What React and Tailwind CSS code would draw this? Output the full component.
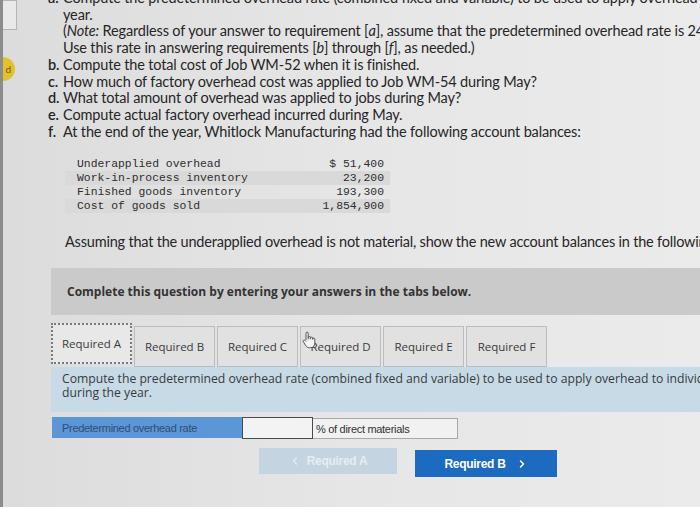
import { ChevronLeft, ChevronRight } from "lucide-react";

const balances = [
  { label: "Underapplied overhead", value: "$ 51,400" },
  { label: "Work-in-process inventory", value: "23,200" },
  { label: "Finished goods inventory", value: "193,300" },
  { label: "Cost of goods sold", value: "1,854,900" },
];

const tabs = ["Required A", "Required B", "Required C", "Required D", "Required E", "Required F"];

function Item({ letter, children }) {
  return (
    <div className="flex whitespace-nowrap">
      <span className="w-[15px] shrink-0 font-semibold">{letter}</span>
      <span>{children}</span>
    </div>
  );
}

function HandCursor() {
  return (
    <svg width="16" height="18" viewBox="0 0 16 18" className="absolute left-[298px] top-[331px]">
      <path
        d="M5 9V2.2a1.1 1.1 0 0 1 2.2 0V8m0-1.5a1.1 1.1 0 0 1 2.2 0V8m0-.8a1.1 1.1 0 0 1 2.2 0V8.5m0-.3a1.1 1.1 0 0 1 2.2 0v4c0 2.5-1.8 4.5-4.3 4.5H8.3c-1.5 0-2.6-.7-3.4-1.9L2.2 10.6a1.1 1.1 0 0 1 1.7-1.3L5 10.5"
        fill="#f4f4f4"
        stroke="#444"
        strokeWidth="0.9"
        strokeLinejoin="round"
      />
    </svg>
  );
}

export default function App() {
  return (
    <div className="relative w-[700px] h-[507px] overflow-hidden bg-linear-to-r from-[#dcdcdc] via-[#e6e6e6] to-[#ebebeb] border-l-[3px] border-[#8c8c8c] font-['Lato',sans-serif] text-[#262626]">
      {/* left-edge fragments */}
      <div className="absolute -left-px top-0 w-[15px] h-[30px] border border-[#b5b5b5] bg-[#e9e9e9]" />
      <div className="absolute -left-[12px] top-[57px] w-[24px] h-[24px] rounded-full bg-[#e2c22c] flex items-center justify-end pr-[4px] text-[10px] text-[#6b5a10]">
        d
      </div>

      {/* question text */}
      <div className="pl-[45px] -mt-[10px] text-[14.5px] leading-[16.7px] tracking-[-0.15px]">
        <Item letter="a.">
          Compute the predetermined overhead rate (combined fixed and variable) to be used to apply overhead to individual jobs during the
        </Item>
        <div className="pl-[15px] whitespace-nowrap">
          <div>year.</div>
          <div>
            (<i>Note:</i> Regardless of your answer to requirement [<i>a</i>], assume that the predetermined overhead rate is 240% of direct materials.
          </div>
          <div>
            Use this rate in answering requirements [<i>b</i>] through [<i>f</i>], as needed.)
          </div>
        </div>
        <Item letter="b.">Compute the total cost of Job WM-52 when it is finished.</Item>
        <Item letter="c.">How much of factory overhead cost was applied to Job WM-54 during May?</Item>
        <Item letter="d.">What total amount of overhead was applied to jobs during May?</Item>
        <Item letter="e.">Compute actual factory overhead incurred during May.</Item>
        <Item letter="f.">At the end of the year, Whitlock Manufacturing had the following account balances:</Item>
      </div>

      {/* balances table */}
      <div className="ml-[62px] mt-[17px] w-[325px] font-['Liberation_Mono',monospace] text-[11.4px] leading-[14px] text-[#2e2e2e]">
        {balances.map((row, i) => (
          <div
            key={row.label}
            className={`flex justify-between pl-[12px] pr-[6px] ${i % 2 === 1 ? "bg-[#d9d9d9]" : ""}`}
          >
            <span>{row.label}</span>
            <span>{row.value}</span>
          </div>
        ))}
      </div>

      <div className="ml-[62px] mt-[20px] whitespace-nowrap text-[14.5px] leading-[17px] tracking-[-0.2px]">
        Assuming that the underapplied overhead is not material, show the new account balances in the following table.
      </div>

      {/* instructions band */}
      <div className="ml-[48px] mt-[18px] h-[47px] bg-[#cacaca] flex items-center pl-[16px] font-['Open_Sans',sans-serif] text-[12px] font-bold text-[#333]">
        Complete this question by entering your answers in the tabs below.
      </div>

      {/* tabs */}
      <div className="ml-[48px] mt-[8px] flex gap-[2px] font-['Open_Sans',sans-serif] text-[11.5px] text-[#3a3a3a]">
        {tabs.map((t, i) => (
          <div
            key={t}
            className={`w-[81px] h-[41px] flex items-center justify-center ${
              i === 0
                ? "bg-[#e8e8e8] border-2 border-dotted border-[#7a7a7a]"
                : "bg-[#e1e1e1] border border-[#bcbcbc] mt-[3px]"
            }`}
          >
            {t}
          </div>
        ))}
      </div>

      <div className="ml-[48px] h-[45px] bg-[#c7dae6] pl-[11px] pt-[5px] font-['Open_Sans',sans-serif] text-[12.2px] leading-[14px] text-[#3a3a3a] whitespace-nowrap">
        <div>Compute the predetermined overhead rate (combined fixed and variable) to be used to apply overhead to individual jobs</div>
        <div>during the year.</div>
      </div>

      {/* answer row */}
      <div className="ml-[49px] mt-[5px] flex items-start font-['Liberation_Sans',sans-serif] text-[11px] tracking-[-0.3px]">
        <div className="w-[190px] h-[21px] bg-[#5b96d6] text-[#2f4e72] pl-[10px] flex items-center">
          Predetermined overhead rate
        </div>
        <div className="w-[71px] h-[22px] bg-[#f3f3f3] border border-[#4a4a4a]" />
        <div className="w-[145px] h-[21px] mt-[1px] bg-[#f1f1f1] border border-[#a8a8a8] border-l-0 pl-[3px] flex items-center text-[#333]">
          % of direct materials
        </div>
      </div>

      {/* nav buttons */}
      <div className="ml-[256px] mt-[9px] flex items-start gap-[18px] font-['Liberation_Sans',sans-serif] text-[12px] font-bold tracking-[-0.3px]">
        <div className="w-[138px] h-[26px] bg-[#c4d4e1] text-[#e6edf3] flex items-center justify-center gap-[6px]">
          <ChevronLeft size={12} strokeWidth={2.5} />
          <span>Required A</span>
        </div>
        <div className="w-[142px] h-[27px] mt-[2px] bg-[#1c6bc0] text-white flex items-center justify-center gap-[10px]">
          <span>Required B</span>
          <ChevronRight size={12} strokeWidth={3} />
        </div>
      </div>

      <HandCursor />
    </div>
  );
}
